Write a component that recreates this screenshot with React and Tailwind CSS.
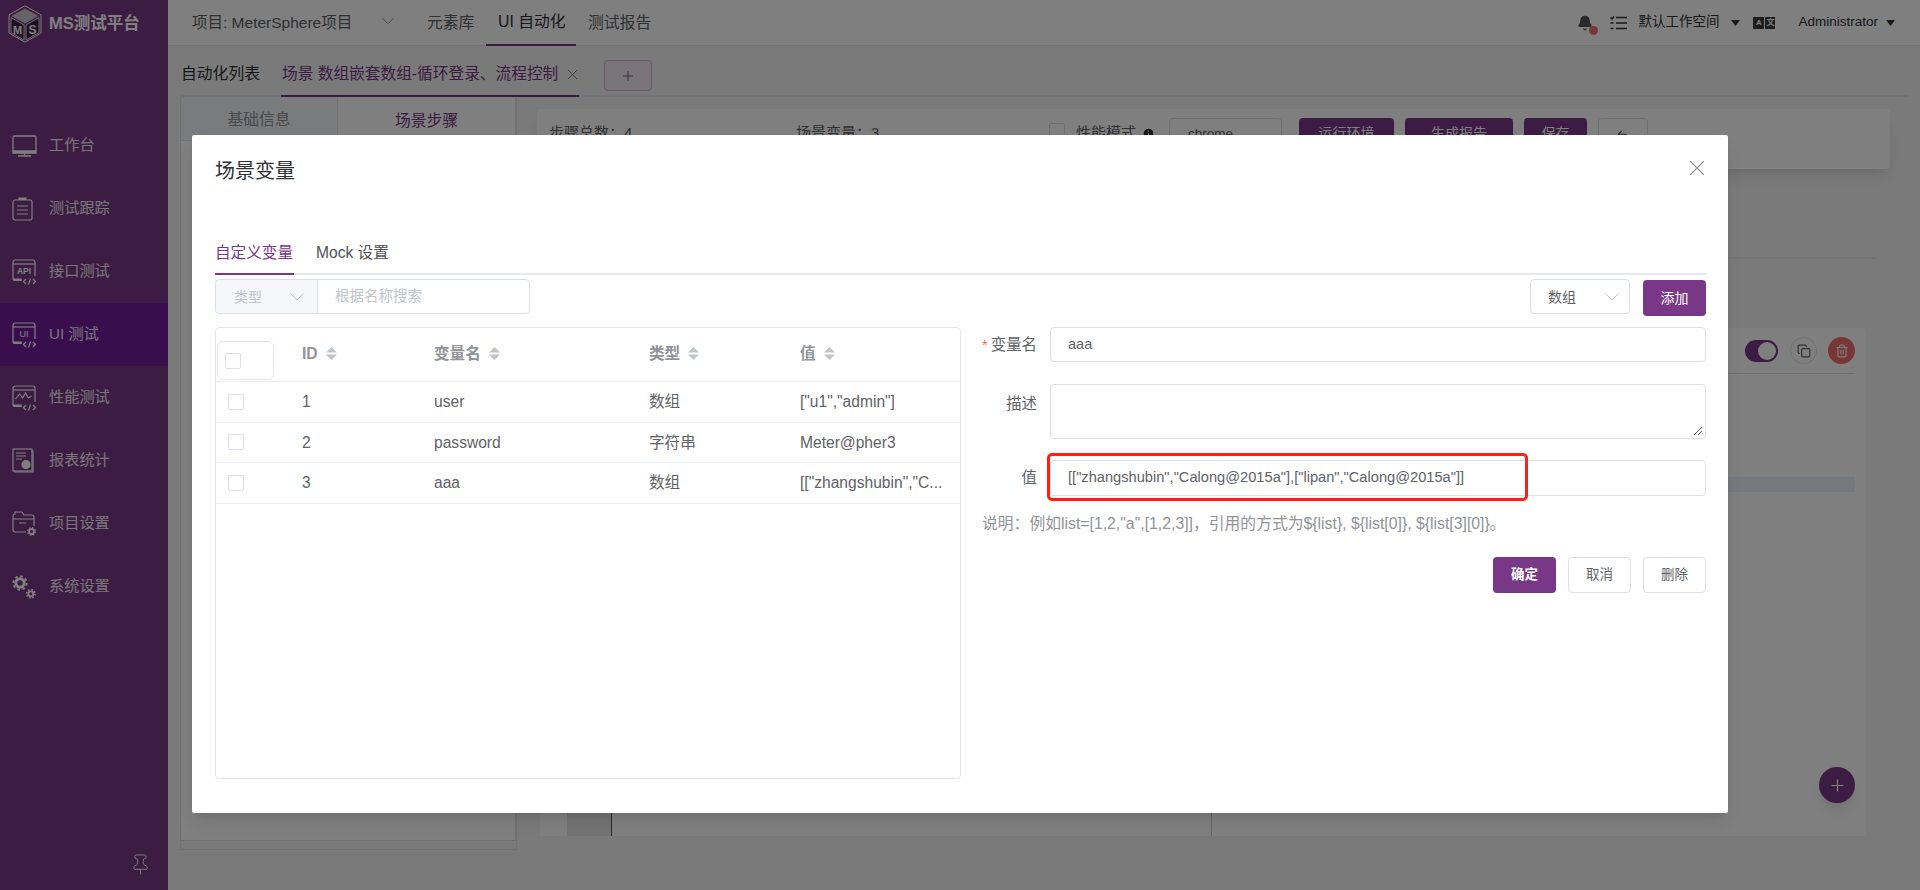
import React from "react";
import { ChevronDown, X, Plus, Bell, Pin, Undo2, Copy, Trash2, Info } from "lucide-react";

const Caret = () => (
  <svg width="9" height="6" viewBox="0 0 9 6" className="shrink-0"><path d="M0 0h9L4.5 6z" fill="#303133" /></svg>
);

const Sort = () => (
  <svg width="11" height="13" viewBox="0 0 11 13" className="shrink-0 ml-[8px]">
    <path d="M5.5 0L11 5.5H0z M0 7.5h11L5.5 13z" fill="#c0c4cc" />
  </svg>
);

const CodeBox = ({ children }) => (
  <svg width="25" height="26" viewBox="0 0 25 26" fill="none" stroke="#fff" strokeWidth="1.2">
    <path d="M10 21H3a2 2 0 0 1-2-2V3a2 2 0 0 1 2-2h18a2 2 0 0 1 2 2v14" />
    <path d="M1 5h22" />
    <path d="M1 20h8v1.5H2z" fill="#fff" />
    <path d="M14 20l-2.5 2.5L14 25M21 20l2.500 2.500L21 25M18.500 19.500l-2 6" />
    {children}
  </svg>
);

const icons = [
  <svg key="m" width="25" height="22" viewBox="0 0 25 22" fill="none" stroke="#fff" strokeWidth="1.300"><rect x="1" y="1" width="23" height="16" rx="1.500" /><path d="M1 16h23v2H1z" fill="#fff" /><path d="M12.500 18v2M6 21h13" /></svg>,
  <svg key="c" width="21" height="24" viewBox="0 0 21 24" fill="none" stroke="#fff" strokeWidth="1.200"><rect x="1" y="3" width="19" height="20" rx="2" /><path d="M7 3V1h7v2" fill="#fff" /><path d="M5 9h11M5 13h11M5 17h11" /></svg>,
  <CodeBox key="a"><text x="12" y="15" textAnchor="middle" fontSize="8.500" fontWeight="700" fill="#fff" stroke="none">API</text></CodeBox>,
  <CodeBox key="u"><text x="12" y="15" textAnchor="middle" fontSize="9" fontWeight="400" fill="#fff" stroke="none">UI</text></CodeBox>,
  <CodeBox key="p"><path d="M3.500 14l4-5 3 4 3-5 3 5 3-2" /></CodeBox>,
  <svg key="r" width="22" height="25" viewBox="0 0 22 25" fill="none" stroke="#fff" strokeWidth="1.200"><rect x="1" y="1" width="19" height="22" /><path d="M19 3h2v21H3v-1" /><path d="M4 5h10M4 8h10M4 11h6" /><circle cx="14" cy="16.500" r="4" fill="#fff" /></svg>,
  <svg key="f" width="24" height="25" viewBox="0 0 24 25" fill="none" stroke="#fff" strokeWidth="1.200"><path d="M14 21H3a2 2 0 0 1-2-2V5a2 2 0 0 1 2-2V1h7l2 3h8a2 2 0 0 1 2 2v9" /><path d="M1 8h21M7 12h7" /><circle cx="19.500" cy="20.500" r="2.500" strokeWidth="1.800" /><circle cx="19.500" cy="20.500" r="3.800" strokeWidth="1.400" strokeDasharray="1.500 1.500" /></svg>,
  <svg key="s" width="24" height="24" viewBox="0 0 24 24" fill="none" stroke="#fff"><circle cx="8" cy="8" r="4.200" strokeWidth="3" /><circle cx="8" cy="8" r="6.700" strokeWidth="2" strokeDasharray="2.600 2.660" /><circle cx="18.800" cy="18.800" r="2.500" strokeWidth="1.800" /><circle cx="18.800" cy="18.800" r="4.200" strokeWidth="1.600" strokeDasharray="1.600 1.700" /></svg>,
];

const menu = ["工作台", "测试跟踪", "接口测试", "UI 测试", "性能测试", "报表统计", "项目设置", "系统设置"];

function Logo() {
  return (
    <svg width="34" height="38" viewBox="0 0 34 38" fill="none" stroke="#fff" strokeWidth="1">
      <path d="M17 .8L33 9.800V28L17 37.200 1 28V9.800z" />
      <path d="M17 3.500L30.500 11 17 18.500 3.500 11z" fill="#c9c9c9" stroke="none" />
      <path d="M3 12.500l13 7.500v15L3 27.500zM31 12.500L18 20v15l13-7.500z" fill="#3d1d45" stroke="#fff" strokeWidth=".8" />
      <text x="9.500" y="29" fontSize="11" fontWeight="700" fill="#fff" stroke="none" textAnchor="middle">M</text>
      <text x="24.500" y="29" fontSize="12" fontWeight="700" fill="#fff" stroke="none" textAnchor="middle">S</text>
    </svg>
  );
}

function Sidebar() {
  return (
    <aside className="w-[168px] h-[890px] shrink-0 bg-[#783887] text-white flex flex-col">
      <div className="h-[114px] pl-[8px] pt-[5px] flex items-start gap-[7px]">
        <Logo />
        <span className="text-[16.500px] font-bold leading-[36px]">MS测试平台</span>
      </div>
      {menu.map((m, i) => (
        <div key={m} className={`h-[63px] flex items-center pl-[12px] ${i === 3 ? "bg-[#701d9a]" : ""}`}>
          <span className="w-[37px] shrink-0 flex items-center">{icons[i]}</span>
          <span className="text-[15.200px] text-white/90">{m}</span>
        </div>
      ))}
      <div className="mt-auto mb-[14px] ml-[129px]">
        <Pin size={23} strokeWidth={1} />
      </div>
    </aside>
  );
}

function Header() {
  return (
    <header className="h-[46px] bg-white border-b border-[#e6e6e6] flex items-stretch text-[#303133] pr-[25px]">
      <div className="w-[247px] pl-[24px] flex items-center text-[#606266] text-[15.500px] shrink-0">
        <span className="w-[185px] whitespace-nowrap">项目: MeterSphere项目</span>
        <ChevronDown size={22} strokeWidth={1} className="text-[#909399] -mt-[3px]" />
      </div>
      <div className="w-[71px] pl-[12px] flex items-center text-[15.800px] text-[#606266]">元素库</div>
      <div className="pl-[12px] flex items-center text-[15.800px] text-[#303133] border-b-2 border-[#783887] -mb-px w-[90px] whitespace-nowrap">UI 自动化</div>
      <div className="px-[12px] flex items-center text-[15.800px] text-[#606266]">测试报告</div>
      <div className="ml-auto flex items-center text-[#303133] text-[13.500px]">
        <span className="relative mr-[17px]">
          <Bell size={16} fill="#555" stroke="#555" />
          <span className="absolute right-[-5px] top-[11px] w-[9px] h-[9px] rounded-full bg-[#f56c6c]" />
        </span>
        <svg width="17" height="14" viewBox="0 0 17 14" fill="none" stroke="#333" strokeWidth="1.500" className="mr-[11px]">
          <path d="M6 1.500h11M6 7h11M6 12.500h11M.5 1.500l1.500 1.500 2-2.500M.5 7h3M.5 12.500h3" />
        </svg>
        <span className="mr-[12px]">默认工作空间</span>
        <Caret />
        <span className="ml-[13px] mr-[23px] w-[22px] h-[12px] flex gap-px text-[8px] font-bold text-white leading-[12px] text-center">
          <span className="w-[11px] bg-[#3a3a3a]">A</span>
          <span className="w-[10px] bg-[#3a3a3a]">文</span>
        </span>
        <span className="mr-[8px]">Administrator</span>
        <Caret />
      </div>
    </header>
  );
}

function TabsRow() {
  return (
    <div className="h-[51px] ml-[13px] mr-[12px] border-b-2 border-[#e4e7ed] flex items-end">
      <div className="w-[100px] h-[49px] flex items-center pt-[7px] text-[15.800px] text-[#303133] whitespace-nowrap">自动化列表</div>
      <div className="w-[298px] h-[51px] pt-[7px] -mb-[2px] flex items-center border-b-2 border-[#783887] text-[#783887] text-[15.700px] whitespace-nowrap">
        <span className="pl-[1px]">场景 数组嵌套数组-循环登录、流程控制</span>
        <X size={17} strokeWidth={1} className="ml-[6px] text-[#606266] shrink-0" />
      </div>
      <button className="ml-[25px] mb-[4px] w-[48px] h-[31px] rounded-[4px] border border-[#c9afcf] bg-[#f2ebf3] text-[#783887] flex items-center justify-center">
        <Plus size={16} strokeWidth={1.300} />
      </button>
    </div>
  );
}

function PageBody() {
  return (
    <div className="flex">
      <div className="ml-[12px] w-[337px] h-[753px] border border-[#e4e4e4] border-t-0 shrink-0">
        <div className="w-[335px] h-[744px] bg-white border-r border-[#dcdfe6] border-b">
          <div className="flex h-[44px] text-[15.800px] text-[#909399]">
            <div className="w-[157px] flex items-center justify-center pt-[3px] bg-[#f5f7fa] border-b border-[#e4e7ed] border-r">基础信息</div>
            <div className="flex-1 flex items-center justify-center pt-[3px] text-[#783887]">场景步骤</div>
          </div>
        </div>
      </div>
      <div className="ml-[20px] w-[1353px] shrink-0">
        <div className="mt-[12px] h-[60px] bg-white rounded-[4px] shadow-lg flex items-start pt-[9px] text-[15px] text-[#606266] relative">
          <span className="absolute left-[12px] top-[13px]">步骤总数：4</span>
          <span className="absolute left-[259px] top-[13px]">场景变量：3</span>
          <span className="absolute left-[512px] top-[14px] w-[16px] h-[16px] border border-[#dcdfe6] rounded-[2px]" />
          <span className="absolute left-[539px] top-[13px] flex items-center">性能模式<Info size={13} className="ml-[6px]" fill="#333" stroke="#fff" /></span>
          <span className="absolute left-[632px] top-[9px] w-[113px] h-[36px] border border-[#dcdfe6] rounded-[4px] pl-[18px] leading-[30px] text-[13.500px]">chrome</span>
          <span className="absolute left-[762px] top-[9px] w-[95px] h-[36px] rounded-[4px] bg-[#783887] text-white text-center leading-[30px] text-[14px]">运行环境</span>
          <span className="absolute left-[868px] top-[9px] w-[108px] h-[36px] rounded-[4px] bg-[#783887] text-white text-center leading-[30px] text-[14px]">生成报告</span>
          <span className="absolute left-[987px] top-[9px] w-[63px] h-[36px] rounded-[4px] bg-[#783887] text-white text-center leading-[30px] text-[14px]">保存</span>
          <span className="absolute left-[1061px] top-[9px] w-[50px] h-[36px] rounded-[4px] border border-[#dcdfe6] flex items-center justify-center"><Undo2 size={14} /></span>
        </div>
        <div className="mt-[88px] w-[1339px] border-b-2 border-[#e4e7ed]" />
        <div className="mt-[69px] ml-[3px] w-[1326px] h-[508px] bg-[#ffffff] rounded-t-[4px] relative overflow-hidden flex flex-col">
          <div className="h-[46px] mr-[11px] border-b border-[#dcdfe6] flex items-center justify-end">
            <span className="w-[33px] h-[22px] rounded-full bg-[#783887] flex items-center justify-end pr-[2px] mr-[12px]">
              <span className="w-[18px] h-[18px] rounded-full bg-white" />
            </span>
            <span className="w-[27px] h-[27px] rounded-full border border-[#dcdfe6] text-[#606266] flex items-center justify-center mr-[11px]"><Copy size={14} /></span>
            <span className="w-[27px] h-[27px] rounded-full bg-[#f56c6c] text-white flex items-center justify-center"><Trash2 size={14} /></span>
          </div>
          <div className="mt-[103px] mr-[11px] h-[15px] bg-[#ecf5ff]" />
          <div className="absolute left-[27px] bottom-0 h-[23px] w-[45px] bg-[#e6e6e6] border-r border-[#555]" />
          <div className="absolute left-[671px] bottom-0 h-[23px] w-px bg-[#c8c8c8]" />
          <div className="absolute left-[1279px] top-[439px] w-[36px] h-[36px] rounded-full bg-[#783887] text-white flex items-center justify-center shadow-lg"><Plus size={19} strokeWidth={1.500} /></div>
        </div>
      </div>
    </div>
  );
}

const inputCls = "border border-[#dcdfe6] rounded-[4px] bg-white";

function VarTable() {
  const rows = [
    ["1", "user", "数组", '["u1","admin"]'],
    ["2", "password", "字符串", "Meter@pher3"],
    ["3", "aaa", "数组", '[["zhangshubin","C...'],
  ];
  const Head = ({ w, children }) => (
    <div className={`${w} flex items-center font-bold text-[#909399] text-[15.600px]`}>{children}<Sort /></div>
  );
  const Box = () => <span className="block w-[16px] h-[16px] border border-[#dcdfe6] rounded-[2px] bg-white" />;
  return (
    <div className="w-[746px] h-[452px] border border-[#e4e7ed] rounded-[4px] shrink-0">
      <div className="h-[54px] flex border-b border-[#ebeef5] items-start">
        <div className="w-[57px] h-[39px] mt-[13px] ml-[1px] mr-[28px] border border-[#e4e7ed] rounded-[6px] flex items-center pl-[7px] shrink-0"><Box /></div>
        <div className="h-[52px] flex items-center">
          <Head w="w-[132px]">ID</Head>
          <Head w="w-[215px]">变量名</Head>
          <Head w="w-[151px]">类型</Head>
          <Head w="w-[100px]">值</Head>
        </div>
      </div>
      {rows.map((r) => (
        <div key={r[0]} className="h-[40.500px] flex items-center border-b border-[#ebeef5] text-[15.600px] text-[#606266]">
          <div className="w-[86px] pl-[12px] shrink-0"><Box /></div>
          <div className="w-[132px] shrink-0">{r[0]}</div>
          <div className="w-[215px] shrink-0">{r[1]}</div>
          <div className="w-[151px] shrink-0">{r[2]}</div>
          <div className="whitespace-nowrap">{r[3]}</div>
        </div>
      ))}
    </div>
  );
}

function FormPane() {
  const Label = ({ children, star }) => (
    <div className="w-[62px] shrink-0 text-right text-[15.400px] text-[#606266] whitespace-nowrap">
      {star && <span className="text-[#f56c6c] mr-[3px]">*</span>}{children}
    </div>
  );
  return (
    <div className="ml-[14px] flex-1 text-[#606266]">
      <div className="flex items-center h-[35px]">
        <Label star>变量名</Label>
        <div className={`ml-[13px] flex-1 h-[35px] ${inputCls} flex items-center pl-[17px] text-[14.500px]`}>aaa</div>
      </div>
      <div className="flex mt-[22px] h-[55px]">
        <div className="pt-[8px]"><Label>描述</Label></div>
        <div className={`ml-[13px] flex-1 ${inputCls} relative`}>
          <svg width="10" height="10" viewBox="0 0 10 10" className="absolute right-[2px] bottom-[2px]" stroke="#555" fill="none">
            <path d="M1 9l8-8M5 9l4-4" />
          </svg>
        </div>
      </div>
      <div className="flex items-center h-[36px] mt-[21px]">
        <Label>值</Label>
        <div className={`ml-[13px] flex-1 h-[36px] ${inputCls} flex items-center pl-[17px] text-[14.650px] text-[#606266] relative`}>
          <span className="whitespace-nowrap">{'[["zhangshubin","Calong@2015a"],["lipan","Calong@2015a"]]'}</span>
          <span className="absolute left-[-4px] top-[-8px] w-[481px] h-[48px] border-[3.500px] border-[#ff1f14] rounded-[5px]" />
        </div>
      </div>
      <div className="mt-[17px] h-[22px] pl-[7px] flex items-center text-[15.800px] text-[#909399] whitespace-nowrap">
        说明：例如list=[1,2,"a",[1,2,3]]，引用的方式为{"${list}"}, {"${list[0]}"}, {"${list[3][0]}"}。
      </div>
      <div className="mt-[22px] flex justify-end gap-[12px] text-[13.500px]">
        <button className="w-[63px] h-[36px] rounded-[4px] bg-[#783887] text-white font-bold">确定</button>
        <button className="w-[63px] h-[36px] rounded-[4px] border border-[#dcdfe6] bg-white">取消</button>
        <button className="w-[63px] h-[36px] rounded-[4px] border border-[#dcdfe6] bg-white">删除</button>
      </div>
    </div>
  );
}

function Modal() {
  return (
    <div className="absolute inset-0 bg-black/50 flex justify-center pt-[135px]">
      <div className="w-[1536px] h-[678px] bg-white shadow-lg rounded-[2px] pl-[23px] pr-[22px] relative">
        <X size={26} strokeWidth={1} className="absolute right-[18px] top-[20px] text-[#909399]" />
        <div className="pt-[23px] h-[104px] text-[20px] leading-[26px] text-[#303133]">场景变量</div>
        <div className="flex h-[36px] items-start border-b-2 border-[#e4e7ed] text-[15.600px]">
          <div className="w-[79px] h-[36px] border-b-2 border-[#783887] text-[#783887] pt-[3px] leading-[22px] whitespace-nowrap">自定义变量</div>
          <div className="ml-[22px] text-[#4f5155] pt-[3px] leading-[22px] whitespace-nowrap">Mock 设置</div>
        </div>
        <div className="mt-[4px] h-[37px] flex items-start">
          <div className={`${inputCls} w-[315px] h-[35px] flex overflow-hidden`}>
            <div className="w-[102px] bg-[#f5f7fa] border-r border-[#dcdfe6] flex items-center pl-[18px] pt-px text-[14px] text-[#c0c4cc] shrink-0">
              <span className="w-[51px]">类型</span>
              <ChevronDown size={24} strokeWidth={1} />
            </div>
            <div className="flex items-center pl-[17px] pt-px text-[14.500px] text-[#c0c4cc]">根据名称搜索</div>
          </div>
          <div className={`${inputCls} ml-auto w-[100px] h-[35px] flex items-center pl-[17px] pt-px text-[14px] text-[#606266]`}>
            <span className="w-[52px]">数组</span>
            <ChevronDown size={24} strokeWidth={1} className="text-[#c0c4cc]" />
          </div>
          <button className="ml-[13px] mt-px w-[63px] h-[36px] rounded-[4px] bg-[#783887] text-white text-[14px]">添加</button>
        </div>
        <div className="mt-[11px] flex">
          <VarTable />
          <FormPane />
        </div>
      </div>
    </div>
  );
}

export default function App() {
  return (
    <div className="relative w-[1920px] h-[890px] overflow-hidden flex bg-[#f5f5f5] font-['Liberation_Sans','Noto_Sans_CJK_SC',sans-serif]">
      <Sidebar />
      <main className="flex-1 min-w-0">
        <Header />
        <TabsRow />
        <PageBody />
      </main>
      <Modal />
    </div>
  );
}
